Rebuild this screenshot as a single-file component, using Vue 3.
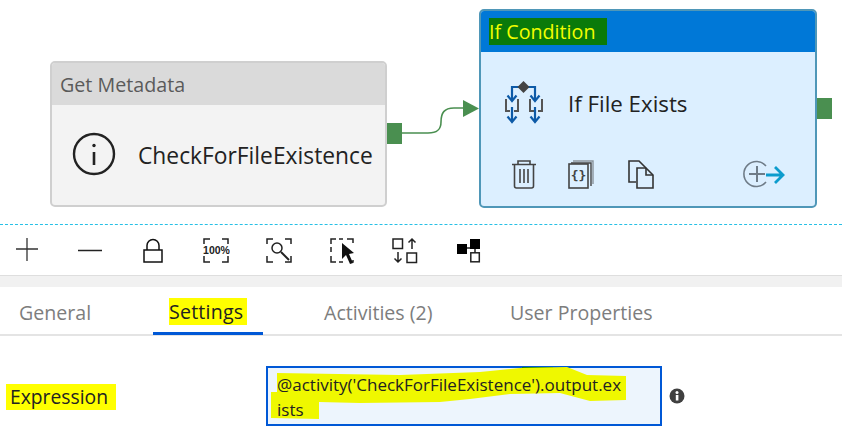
<script setup>
const tabs = ['General', 'Settings', 'Activities (2)', 'User Properties']
</script>

<template>
  <div class="page">
    <section class="canvas">
      <svg class="wire" width="842" height="224" viewBox="0 0 842 224">
        <path d="M402 133H428C438 133 441 129 441 122C441 113 444 108 454 108H466" fill="none" stroke="#4a8f50" stroke-width="1.6" />
        <path d="M463 100L479 108.500L463 117Z" fill="#4a8f50" />
      </svg>

      <div class="port port-left"></div>
      <div class="port port-right"></div>

      <article class="node node-meta">
        <header class="node-head">Get Metadata</header>
        <div class="node-body">
          <svg width="44" height="44" viewBox="0 0 44 44">
            <circle cx="22" cy="22" r="20" fill="none" stroke="#222" stroke-width="2.400" />
            <path d="M22 20V33" stroke="#222" stroke-width="2.600" />
            <circle cx="22" cy="13.500" r="1.700" fill="#222" />
          </svg>
          <span class="node-name meta-name">CheckForFileExistence</span>
        </div>
      </article>

      <article class="node node-if">
        <header class="node-head"><span class="mark-green">If Condition</span></header>
        <div class="node-body">
          <svg width="48" height="48" viewBox="0 0 48 48">
            <path d="M6 19V31H10M14 31H18V19M30 19V31H34M38 31H42V19" fill="none" stroke="#555" stroke-width="2" />
            <path d="M12 20V7H35V20" fill="none" stroke="#0d5aa7" stroke-width="2.200" />
            <path d="M7.500 15.500L12 21L16.500 15.500M30.500 15.500L35 21L39.500 15.500" fill="none" stroke="#0d5aa7" stroke-width="2.200" />
            <path d="M12 27V41M35 27V41" stroke="#0d5aa7" stroke-width="2.200" />
            <path d="M7.500 36.500L12 42L16.500 36.500M30.500 36.500L35 42L39.500 36.500" fill="none" stroke="#0d5aa7" stroke-width="2.200" />
            <path d="M23.500 1L29.500 7L23.500 13L17.500 7Z" fill="#444" />
          </svg>
          <span class="node-name if-name">If File Exists</span>
        </div>
        <div class="node-actions">
          <svg class="act-trash" width="26" height="30" viewBox="0 0 26 30" fill="none" stroke="#444" stroke-width="1.600">
            <path d="M1 5.500H25M7 5V2H19V5M3.500 6V27Q3.500 29 5.500 29H20.500Q22.500 29 22.500 27V6" />
            <path d="M9 10V24M13 10V24M17 10V24" />
          </svg>
          <svg class="act-code" width="26" height="30" viewBox="0 0 26 30" fill="none">
            <path d="M5 2H25V25" stroke="#8a949c" stroke-width="1.400" />
            <path d="M3 4H23V27" stroke="#444" stroke-width="1.400" />
            <rect x="1" y="5" width="19" height="24" stroke="#444" stroke-width="1.600" />
            <text x="10.500" y="21" class="braces">{}</text>
          </svg>
          <svg class="act-copy" width="28" height="30" viewBox="0 0 28 30" fill="none" stroke="#333" stroke-width="1.600">
            <path d="M9 23H2V2H12L19 9" />
            <path d="M10 9H19L26 16V29H10Z" />
            <path d="M19 9V16H26" />
          </svg>
          <svg class="act-add" width="46" height="30" viewBox="0 0 46 30" fill="none">
            <path d="M24 23A12.500 12.500 0 1 1 24 7" stroke="#6f7c88" stroke-width="1.600" />
            <path d="M7 15H23M15 7V23" stroke="#6f7c88" stroke-width="2" />
            <path d="M24 16H41M33 8L41 16L33 24" stroke="#0c9ccd" stroke-width="2.800" />
          </svg>
        </div>
      </article>
    </section>

    <nav class="toolbar">
      <svg width="28" height="28" viewBox="0 0 28 28" fill="none" stroke="#333" stroke-width="1.300"><path d="M3 13H25M14 2V25" /></svg>
      <svg width="28" height="28" viewBox="0 0 28 28" fill="none" stroke="#222" stroke-width="1.500"><path d="M2 14.500H26" /></svg>
      <svg width="28" height="28" viewBox="0 0 28 28" fill="none" stroke="#111" stroke-width="1.500"><rect x="5" y="14" width="18" height="12" /><path d="M8 14V9.500A6 6 0 0 1 20 9.500V14" /></svg>
      <svg width="28" height="28" viewBox="0 0 28 28" fill="none" stroke="#222" stroke-width="1.500"><path d="M2 8V3H8M20 3H26V8M2 20V26H8M20 26H26V20" /><text x="14.500" y="18" class="pct">100%</text></svg>
      <svg width="28" height="28" viewBox="0 0 28 28" fill="none" stroke="#222" stroke-width="1.500"><path d="M2 8V3H8M20 3H26V8M2 20V26H8M20 26H26V20" /><circle cx="12" cy="12" r="5" /><path d="M16 16L24 24" stroke-width="2" /></svg>
      <svg width="28" height="28" viewBox="0 0 28 28" fill="none" stroke="#222" stroke-width="1.500"><path d="M3 8V3H8M11 3H15M19 3H25V7M3 11V16M3 20V26H8M11 26H15M23 26H25V24" /><path d="M14 7L26 17L21 18L25 27L22 28L18 19L14 23Z" fill="#111" stroke="none" /></svg>
      <svg width="28" height="28" viewBox="0 0 28 28" fill="none" stroke="#222" stroke-width="1.500"><rect x="2" y="3" width="9.500" height="9.500" /><rect x="16" y="17" width="9.500" height="9.500" /><path d="M21 13V3M17.500 6.500L21 3L24.500 6.500M7 16V26M3.500 22.500L7 26L10.500 22.500" /></svg>
      <svg width="28" height="28" viewBox="0 0 28 28" fill="none" stroke="#222" stroke-width="1.500"><rect x="3" y="8" width="10" height="10" fill="#000" stroke="none" /><rect x="16" y="3" width="10" height="10" fill="#000" stroke="none" /><rect x="16.800" y="16.800" width="8.500" height="9" /><path d="M13 12H16M21 13V17" /></svg>
    </nav>

    <div class="strip"></div>

    <div class="tabs">
      <div v-for="(t, i) in tabs" :key="t" class="tab" :class="['tab-' + i, { active: i === 1 }]">
        <span :class="{ 'mark-yellow': i === 1 }">{{ t }}</span>
      </div>
    </div>

    <div class="form-row">
      <label class="mark-yellow expr-label">Expression</label>
      <div class="expr-box">
        <svg class="scribble" width="396" height="60" viewBox="0 0 396 60">
          <path d="M256 1H287V4H256Z" fill="#0a7a0a" />
          <path d="M11 7L134 9L214 6L254 2L301 1L321 9L360 10V34L324 35L294 27L244 28L204 33L174 36L94 37L53 36V53L5 52V26L11 26Z" fill="#eff800" />
        </svg>
        <div class="expr-text">
          <div>@activity('CheckForFileExistence').output.ex</div>
          <div>ists</div>
        </div>
      </div>
      <svg class="hint" width="16" height="16" viewBox="0 0 16 16">
        <circle cx="8" cy="8" r="7.500" fill="#404040" />
        <rect x="6.800" y="7" width="2.600" height="5.500" fill="#fff" />
        <circle cx="8" cy="4.500" r="1.500" fill="#fff" />
      </svg>
    </div>
  </div>
</template>

<style>
html, body { margin: 0; background: #fff; }
</style>

<style scoped>
.page {
  width: 842px;
  height: 448px;
  overflow: hidden;
  background: #fff;
  font-family: "Open Sans", "Noto Sans", sans-serif;
  color: #222;
}
.canvas {
  position: relative;
  height: 224px;
  border-bottom: 1px dashed #27c0e6;
}
.wire { position: absolute; left: 0; top: 0; }
.port { position: absolute; background: #4a8f50; width: 16px; height: 21px; }
.port-left { left: 386px; top: 123px; }
.port-right { left: 816px; top: 98px; }
.node {
  position: absolute;
  box-sizing: border-box;
  border-radius: 5px;
  overflow: hidden;
  display: flex;
  flex-direction: column;
}
.node-meta {
  left: 50px; top: 61px; width: 337px; height: 146px;
  border: 2px solid #cfcfcf;
  background: #f3f3f3;
}
.node-if {
  left: 479px; top: 9px; width: 338px; height: 199px;
  border: 2px solid #4f97b8;
  background: #dcefff;
}
.node-head {
  height: 42px;
  flex: none;
  display: flex;
  align-items: center;
  padding-left: 8px;
  font-size: 19.700px;
}
.node-meta .node-head { background: #dadada; color: #5a5a5a; }
.node-if .node-head { background: #0078d7; margin: -1px -1px 0; padding-left: 9px; }
.mark-green {
  background: #0a7a0a;
  color: #f2ff00;
  width: 118px;
  height: 27px;
  line-height: 27px;
}
.node-body { display: flex; align-items: center; }
.node-meta .node-body { padding: 27px 0 0 20px; gap: 22px; }
.node-if .node-body { padding: 28px 0 0 19px; gap: 20px; }
.node-name { color: #222; white-space: nowrap; }
.meta-name { font-size: 22.800px; margin-top: 2px; }
.if-name { font-size: 22.300px; margin-top: -2px; }
.node-actions { display: flex; align-items: flex-start; padding: 31px 0 0 30px; }
.act-code { margin-left: 31px; }
.act-copy { margin-left: 33px; }
.act-add { margin-left: 87px; }
.braces { font: bold 13px "DejaVu Sans Mono", monospace; fill: #444; stroke: none; text-anchor: middle; }
.toolbar {
  height: 50px;
  display: flex;
  align-items: center;
  gap: 35px;
  padding-left: 13px;
}
.pct { font: bold 10.500px "Liberation Sans", sans-serif; fill: #222; stroke: none; text-anchor: middle; }
.strip {
  height: 11px;
  background: #f1f1f1;
  border-top: 1px solid #dedede;
}
.tabs {
  height: 47px;
  display: flex;
  border-bottom: 2px solid #e4e4e4;
}
.tab {
  box-sizing: border-box;
  height: 48px;
  padding-top: 3px;
  display: flex;
  align-items: center;
  font-size: 19.600px;
  color: #7d7d7d;
  white-space: nowrap;
}
.tab-0 { margin-left: 19px; width: 134px; }
.tab-1 {
  width: 110px;
  padding-left: 16px;
  border-bottom: 3px solid #0058d6;
  color: #222;
}
.tab-2 { margin-left: 61px; width: 186px; }
.mark-yellow { background: #ffff00; }
.tab-1 .mark-yellow { display: inline-block; width: 78px; line-height: 27px; letter-spacing: 0.200px; }
.form-row {
  display: flex;
  align-items: center;
  padding: 30px 0 0 6px;
}
.expr-label {
  width: 110px;
  height: 26px;
  line-height: 26px;
  font-size: 19.300px;
  color: #222;
  box-sizing: border-box;
  padding-left: 4px;
  margin-top: 2px;
}
.expr-box {
  position: relative;
  box-sizing: border-box;
  width: 396px;
  height: 60px;
  margin-left: 150px;
  border: 2px solid #0058d6;
  background: #edf5fd;
}
.scribble { position: absolute; left: -2px; top: -2px; }
.expr-text {
  position: relative;
  padding: 4px 0 0 9px;
  font-size: 17px;
  line-height: 25px;
  color: #222;
  white-space: nowrap;
}
.hint { margin: 0 0 0 7px; }
</style>
